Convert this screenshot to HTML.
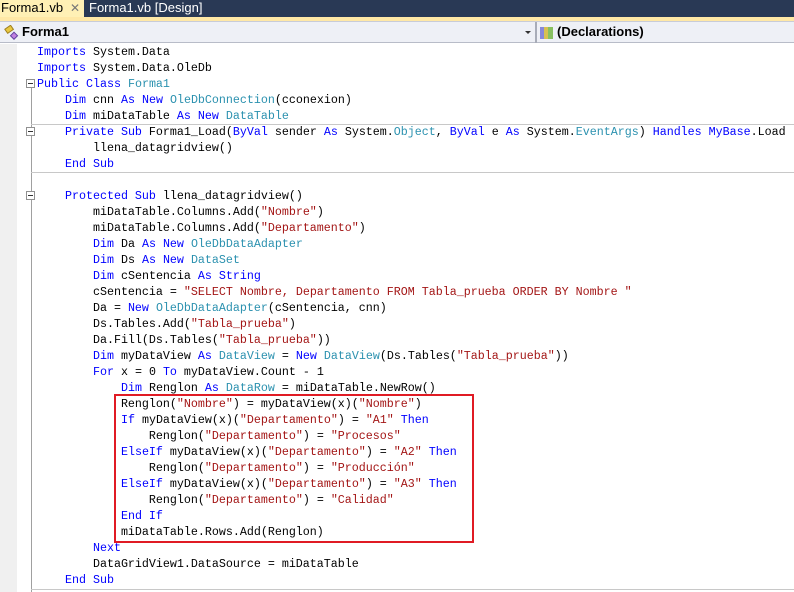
<!DOCTYPE html>
<html><head><meta charset="utf-8"><style>
body{margin:0;width:794px;height:592px;overflow:hidden;background:#fff;position:relative;font-family:"Liberation Sans",sans-serif}
#tabs{position:absolute;left:0;top:0;width:794px;height:17px;background:#293955}
.t1{position:absolute;left:0;top:0;width:84px;height:17px;background:#fff0b5;font-size:13px;line-height:16px;color:#000;padding-left:1px;box-sizing:border-box}
.t1 span{position:absolute;left:70px;top:0;color:#777;font-size:12px}
.t2{position:absolute;left:89px;top:0;font-size:13px;line-height:16px;color:#fff}
#strip{position:absolute;left:0;top:17px;width:794px;height:4px;background:#ffe8a6}
#dd{position:absolute;left:0;top:21px;width:794px;height:22px;background:#eef0f6;border-bottom:1px solid #b8bcc8;border-top:1px solid #c8ccd8;box-sizing:border-box;font-size:13px;font-weight:bold}
.d1{position:absolute;left:22px;top:2px}
.d2{position:absolute;left:557px;top:2px}
.sep{position:absolute;left:535px;top:0;width:2px;height:21px;background:#a8acb8}
.arr{position:absolute;left:525px;top:9px;border:3px solid transparent;border-top:3px solid #333}
#gut{position:absolute;left:0;top:44px;width:17px;height:548px;background:#f0f0f0}
#vl{position:absolute;left:31px;top:84px;width:1px;height:508px;background:#a0a0a0}
.box{position:absolute;left:26px;width:9px;height:9px;border:1px solid #909090;background:#fff;box-sizing:border-box}
.box:after{content:"";position:absolute;left:1px;top:3px;width:5px;height:1px;background:#333}
.hl{position:absolute;left:31px;height:1px;width:763px;background:#c8c8c8}
pre{position:absolute;left:37px;top:44px;margin:0;font-family:"Liberation Mono",monospace;font-size:11.67px;line-height:16px;color:#000}
.k{color:#0000ff}.y{color:#2b91af}.s{color:#a31515}
#red{position:absolute;left:114px;top:394px;width:360px;height:149px;border:2px solid #e01b24;box-sizing:border-box}
</style></head><body>
<div id="tabs"><div class="t1">Forma1.vb<span>✕</span></div><div class="t2">Forma1.vb [Design]</div></div>
<div id="strip"></div>
<div id="dd"><svg style="position:absolute;left:4px;top:3px" width="16" height="16"><rect x="2" y="2" width="7" height="5" fill="#e8c840" stroke="#a08020" transform="rotate(-35 5 5)"/><rect x="8" y="8" width="5" height="5" fill="#c080e0" stroke="#6040a0" transform="rotate(45 10 10)"/></svg><span class="d1">Forma1</span><div class="arr"></div><div class="sep"></div>
<svg style="position:absolute;left:539px;top:3px" width="16" height="15"><rect x="1" y="2" width="4" height="12" fill="#8888d8"/><rect x="5" y="2" width="4" height="12" fill="#d8c050"/><rect x="9" y="2" width="5" height="12" fill="#88c060"/></svg><span class="d2">(Declarations)</span></div>
<div id="gut"></div>
<div id="vl"></div>
<div class="box" style="top:79px"></div>
<div class="box" style="top:127px"></div>
<div class="box" style="top:191px"></div>
<div class="hl" style="top:124px"></div>
<div class="hl" style="top:172px"></div>
<div class="hl" style="top:589px"></div>
<pre><span class="k">Imports</span> System.Data
<span class="k">Imports</span> System.Data.OleDb
<span class="k">Public Class</span> <span class="y">Forma1</span>
    <span class="k">Dim</span> cnn <span class="k">As New</span> <span class="y">OleDbConnection</span>(cconexion)
    <span class="k">Dim</span> miDataTable <span class="k">As New</span> <span class="y">DataTable</span>
    <span class="k">Private Sub</span> Forma1_Load(<span class="k">ByVal</span> sender <span class="k">As</span> System.<span class="y">Object</span>, <span class="k">ByVal</span> e <span class="k">As</span> System.<span class="y">EventArgs</span>) <span class="k">Handles</span> <span class="k">MyBase</span>.Load
        llena_datagridview()
    <span class="k">End Sub</span>

    <span class="k">Protected Sub</span> llena_datagridview()
        miDataTable.Columns.Add(<span class="s">"Nombre"</span>)
        miDataTable.Columns.Add(<span class="s">"Departamento"</span>)
        <span class="k">Dim</span> Da <span class="k">As New</span> <span class="y">OleDbDataAdapter</span>
        <span class="k">Dim</span> Ds <span class="k">As New</span> <span class="y">DataSet</span>
        <span class="k">Dim</span> cSentencia <span class="k">As String</span>
        cSentencia = <span class="s">"SELECT Nombre, Departamento FROM Tabla_prueba ORDER BY Nombre "</span>
        Da = <span class="k">New</span> <span class="y">OleDbDataAdapter</span>(cSentencia, cnn)
        Ds.Tables.Add(<span class="s">"Tabla_prueba"</span>)
        Da.Fill(Ds.Tables(<span class="s">"Tabla_prueba"</span>))
        <span class="k">Dim</span> myDataView <span class="k">As</span> <span class="y">DataView</span> = <span class="k">New</span> <span class="y">DataView</span>(Ds.Tables(<span class="s">"Tabla_prueba"</span>))
        <span class="k">For</span> x = 0 <span class="k">To</span> myDataView.Count - 1
            <span class="k">Dim</span> Renglon <span class="k">As</span> <span class="y">DataRow</span> = miDataTable.NewRow()
            Renglon(<span class="s">"Nombre"</span>) = myDataView(x)(<span class="s">"Nombre"</span>)
            <span class="k">If</span> myDataView(x)(<span class="s">"Departamento"</span>) = <span class="s">"A1"</span> <span class="k">Then</span>
                Renglon(<span class="s">"Departamento"</span>) = <span class="s">"Procesos"</span>
            <span class="k">ElseIf</span> myDataView(x)(<span class="s">"Departamento"</span>) = <span class="s">"A2"</span> <span class="k">Then</span>
                Renglon(<span class="s">"Departamento"</span>) = <span class="s">"Producción"</span>
            <span class="k">ElseIf</span> myDataView(x)(<span class="s">"Departamento"</span>) = <span class="s">"A3"</span> <span class="k">Then</span>
                Renglon(<span class="s">"Departamento"</span>) = <span class="s">"Calidad"</span>
            <span class="k">End If</span>
            miDataTable.Rows.Add(Renglon)
        <span class="k">Next</span>
        DataGridView1.DataSource = miDataTable
    <span class="k">End Sub</span></pre>
<div id="red"></div>
</body></html>
